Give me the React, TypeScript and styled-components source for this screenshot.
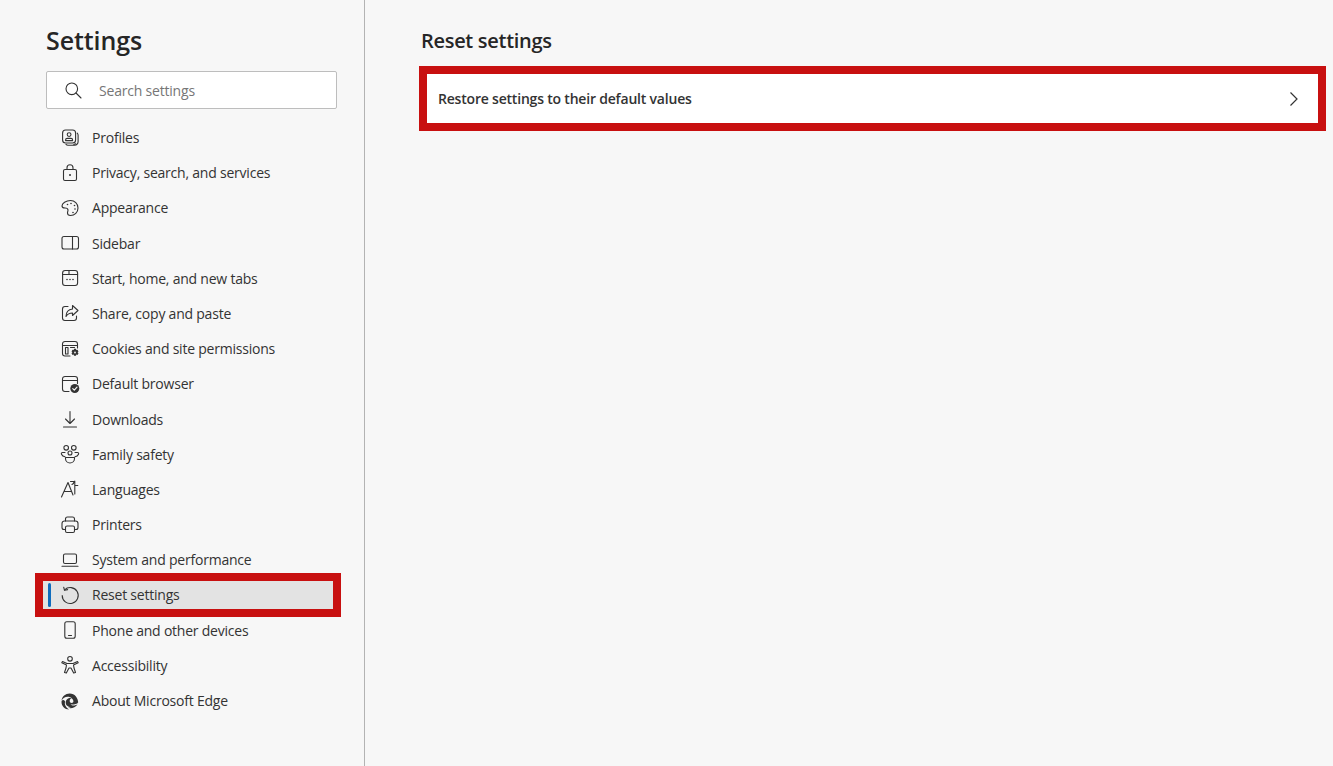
import React from "react";
import styled, { createGlobalStyle, css } from "styled-components";

const Global = createGlobalStyle`
  html, body { margin: 0; padding: 0; background: #f7f7f7; overflow: hidden; }
  #root { height: 766px; }
  * { box-sizing: border-box; }
`;

const FONT = `"Open Sans", "Noto Sans", "Liberation Sans", sans-serif`;

const Page = styled.div`
  display: flex;
  height: 766px;
  background: #f7f7f7;
  color: #262626;
  font-family: ${FONT};
`;

const Sidebar = styled.aside`
  width: 365px;
  flex: none;
  border-right: 1px solid #b3b3b3;
  padding: 22px 0 0 46px;
`;

const Title = styled.h1`
  margin: 0;
  font-size: 25px;
  line-height: 36px;
  font-weight: 600;
  color: #262626;
  letter-spacing: -0.1px;
`;

const Search = styled.div`
  display: flex;
  align-items: center;
  width: 291px;
  height: 38px;
  margin-top: 13px;
  padding-left: 16px;
  gap: 16px;
  background: #fff;
  border: 1px solid #bdbdbd;
  border-radius: 2px;
  color: #767676;
  font-size: 14px;
  letter-spacing: -0.2px;
`;

const Nav = styled.nav`
  display: flex;
  flex-direction: column;
  gap: 7.2px;
  width: 290px;
  margin: 14.5px 0 0 -3px;
`;

const Row = styled.div<{ $active?: boolean }>`
  position: relative;
  display: flex;
  align-items: center;
  gap: 12px;
  height: 28px;
  padding-left: 17px;
  font-size: 14px;
  letter-spacing: -0.22px;
  color: #333;
  white-space: nowrap;
  ${(p) =>
    p.$active &&
    css`
      background: #e3e3e3;
      outline: 8px solid #c81010;
      &::before {
        content: "";
        position: absolute;
        left: 5px;
        top: 2px;
        bottom: 2px;
        width: 3px;
        border-radius: 2px;
        background: #0f6cbd;
      }
    `}
`;

const Glyph = styled.svg`
  width: 20px;
  height: 20px;
  flex: none;
  fill: none;
  stroke: #333;
  stroke-width: 1.1;
  stroke-linecap: round;
  stroke-linejoin: round;
`;

const Main = styled.main`
  flex: 1;
  padding: 26px 15px 0 56px;
  min-width: 0;
`;

const Heading = styled.h2`
  margin: 0;
  font-size: 20px;
  line-height: 30px;
  font-weight: 600;
  color: #262626;
  letter-spacing: -0.3px;
`;

const Card = styled.div`
  display: flex;
  align-items: center;
  justify-content: space-between;
  height: 49px;
  margin: 18px 0 0 6px;
  padding: 0 16px 0 11px;
  background: #fff;
  outline: 8px solid #c81010;
  font-size: 14px;
  font-weight: 600;
  letter-spacing: -0.2px;
  color: #333;
`;

const Chevron = styled.svg`
  width: 16px;
  height: 16px;
  fill: none;
  stroke: #333;
  stroke-width: 1.2;
`;

const FillDot = styled.circle`
  fill: #333;
  stroke: none;
`;

const Solid = styled.path`
  fill: #333;
  stroke: none;
`;

const Knock = styled.path`
  fill: none;
  stroke: #f7f7f7;
  stroke-width: 1.2;
`;

const icons: Record<string, React.ReactNode> = {
  profiles: (
    <>
      <rect x="2.6" y="2" width="13" height="13" rx="3" />
      <circle cx="9.1" cy="6.6" r="1.9" />
      <path d="M5.6 12.6v-.6c0-1 .8-1.6 1.6-1.6h3.8c.8 0 1.6.6 1.6 1.6v.6z" />
      <path d="M17.2 5.2c.6.6.9 1.2.9 2v6.4c0 2-1.600 3.600-3.600 3.600H8c-.8 0-1.500-.3-2-.9" />
      <path d="M15.800 15.800c-.8 0-1.500.4-2 .8" />
    </>
  ),
  privacy: (
    <>
      <rect x="3.500" y="6.500" width="13" height="11" rx="1.500" />
      <path d="M7 6.500V4.800a3 3 0 0 1 6 0v1.700" />
      <FillDot cx="10" cy="12" r="1" />
    </>
  ),
  appearance: (
    <>
      <path d="M10.500 2.500c-4.500 0-8.500 3-8.500 5.500 0 1.500 1.500 2 3 2s3 .5 3 2-.5 1.500-.5 3 1.500 2.500 3 2.500a7.500 7.500 0 0 0 0-15z" />
      <FillDot cx="7.500" cy="6.500" r=".8" />
      <FillDot cx="11" cy="5.500" r=".8" />
      <FillDot cx="14.500" cy="7.500" r=".8" />
      <FillDot cx="15" cy="11" r=".8" />
      <FillDot cx="13" cy="14.500" r=".8" />
    </>
  ),
  sidebar: (
    <>
      <rect x="2" y="3.500" width="16.500" height="12.500" rx="2" />
      <path d="M12.500 3.500V16" />
    </>
  ),
  start: (
    <>
      <rect x="2.600" y="2.500" width="15" height="15" rx="2.500" />
      <path d="M2.600 6.500h6.400V2.500M9 6.500h8.600" />
      <FillDot cx="7" cy="11.500" r=".8" />
      <FillDot cx="10" cy="11.500" r=".8" />
      <FillDot cx="13" cy="11.500" r=".8" />
    </>
  ),
  share: (
    <>
      <path d="M8 3.500H5a2.500 2.500 0 0 0-2.500 2.500v9A2.500 2.500 0 0 0 5 17.500h9a2.500 2.500 0 0 0 2.500-2.500v-2" />
      <path d="M12.500 2.500 18 7.500l-5.500 5V10c-3 0-5 1-6.500 3.500 0-4.500 2.500-7 6.500-7.500z" />
    </>
  ),
  cookies: (
    <>
      <path d="M10 17H5a2.500 2.500 0 0 1-2.500-2.500V5A2.500 2.500 0 0 1 5 2.500h10A2.500 2.500 0 0 1 17.500 5v4" />
      <path d="M2.500 6.500h15M5.500 8.500h2.500v6.500H5.500z" />
      <path d="M10.500 8.500h4" />
      <Solid d="M14 9.800h2l.3 1.300 1.200-.4 1 1.700-.9.900.9.900-1 1.700-1.200-.4-.3 1.300h-2l-.3-1.300-1.200.4-1-1.700.9-.9-.9-.9 1-1.700 1.200.4z" />
      <FillDot cx="15" cy="13.500" r=".9" style={{ fill: "#f7f7f7" }} />
    </>
  ),
  browser: (
    <>
      <path d="M9 17.500H5A2.500 2.500 0 0 1 2.500 15V5A2.500 2.500 0 0 1 5 2.500h10A2.500 2.500 0 0 1 17.500 5v4.500" />
      <path d="M2.500 6.500h15" />
      <FillDot cx="14.800" cy="14.500" r="4.500" />
      <Knock d="M12.800 14.600l1.500 1.500 2.700-2.900" />
    </>
  ),
  downloads: (
    <>
      <path d="M10 2.500v12M5.500 10l4.500 4.500 4.500-4.500M3.500 18h13" />
    </>
  ),
  family: (
    <>
      <circle cx="6.200" cy="3.800" r="2.300" />
      <circle cx="13.800" cy="3.800" r="2.300" />
      <circle cx="10" cy="9" r="2" />
      <path d="M5 8.500H2.500c-.8 0-1.500.7-1 1.700.5 1.200 1.800 2.300 3.500 2.500M15 8.500h2.500c.8 0 1.500.7 1 1.700-.5 1.200-1.800 2.300-3.500 2.500" />
      <path d="M5.500 13.500h9v1a4.500 4.500 0 0 1-9 0z" />
    </>
  ),
  languages: (
    <>
      <path d="M1.500 18 8 3.500 13 16M4 12.500h7" />
      <path d="M10.500 2.500h3.500v-.0M14 2.500c0 1.500-.8 2.500-2 3M14.800 2v13M14.800 6.500h3" />
    </>
  ),
  printers: (
    <>
      <path d="M5.500 6V4a2 2 0 0 1 2-2h5a2 2 0 0 1 2 2v2" />
      <path d="M5 14.500H4a2 2 0 0 1-2-2V8.500A2.500 2.500 0 0 1 4.500 6h11A2.500 2.500 0 0 1 18 8.500v4a2 2 0 0 1-2 2h-1" />
      <rect x="5.500" y="11" width="9" height="6.500" rx="1.500" />
    </>
  ),
  system: (
    <>
      <rect x="3.500" y="4" width="13" height="9.500" rx="1.500" />
      <path d="M2 16.200h16" />
    </>
  ),
  reset: (
    <>
      <path d="M4.600 4.800A8 8 0 1 1 2.200 10.500" />
      <path d="M3.700 2.200l.8 3.100 3.100-.7" />
    </>
  ),
  phone: (
    <>
      <rect x="4.800" y="1.800" width="10.400" height="16.400" rx="2" />
      <path d="M8.500 15.500h3" />
    </>
  ),
  accessibility: (
    <>
      <circle cx="10" cy="3.800" r="2.300" />
      <path d="M2.500 6.500 7 8.500h6l4.500-2 .7 1.300L13.500 10l.5 3 1.500 4.500-1.800.6L11 13H9l-2.700 5.100-1.800-.6L6 13l.5-3-4.700-2.200z" />
    </>
  ),
  edge: (
    <>
      <Solid d="M18.200 11.700c0-4.900-3.600-9.200-8.500-9.200-4.300 0-7.700 3-8.200 7.200 1.300-2.600 3.600-4 6.200-4 3.100 0 5.700 2.300 5.700 4.600 0 1-.6 1.700-1.700 1.700-1.200 0-2-.6-2-1.900 0-1.300.8-2.400 2-3-3.300-.8-6 1.600-6 4.400 0 2.800 2.400 4.500 5.100 4.500-.7.600-1.800 1-3 .8 3.700 1.300 7.600-.5 9.700-3.400l-2.300.9c-1.600.6-3.800.3-4.600-1.100 3.100.9 7.600-.3 7.600-2.500z" />
      <Solid d="M1.500 10.500c-.2 4.500 3.400 8 7.500 8-3.400-2.200-4.700-5-4-8.300C3.600 8 2 9 1.500 10.500z" />
    </>
  ),
};

const items: { key: string; label: string; active?: boolean }[] = [
  { key: "profiles", label: "Profiles" },
  { key: "privacy", label: "Privacy, search, and services" },
  { key: "appearance", label: "Appearance" },
  { key: "sidebar", label: "Sidebar" },
  { key: "start", label: "Start, home, and new tabs" },
  { key: "share", label: "Share, copy and paste" },
  { key: "cookies", label: "Cookies and site permissions" },
  { key: "browser", label: "Default browser" },
  { key: "downloads", label: "Downloads" },
  { key: "family", label: "Family safety" },
  { key: "languages", label: "Languages" },
  { key: "printers", label: "Printers" },
  { key: "system", label: "System and performance" },
  { key: "reset", label: "Reset settings", active: true },
  { key: "phone", label: "Phone and other devices" },
  { key: "accessibility", label: "Accessibility" },
  { key: "edge", label: "About Microsoft Edge" },
];

export default function App() {
  return (
    <Page>
      <Global />
      <Sidebar>
        <Title>Settings</Title>
        <Search>
          <Glyph viewBox="0 0 20 20">
            <circle cx="8.800" cy="8.800" r="5.800" />
            <path d="M13 13l5 5" />
          </Glyph>
          Search settings
        </Search>
        <Nav>
          {items.map((it) => (
            <Row key={it.key} $active={it.active}>
              <Glyph viewBox="0 0 20 20">{icons[it.key]}</Glyph>
              {it.label}
            </Row>
          ))}
        </Nav>
      </Sidebar>
      <Main>
        <Heading>Reset settings</Heading>
        <Card>
          Restore settings to their default values
          <Chevron viewBox="0 0 16 16">
            <path d="M4.500 1.500 11 8l-6.500 6.500" />
          </Chevron>
        </Card>
      </Main>
    </Page>
  );
}
